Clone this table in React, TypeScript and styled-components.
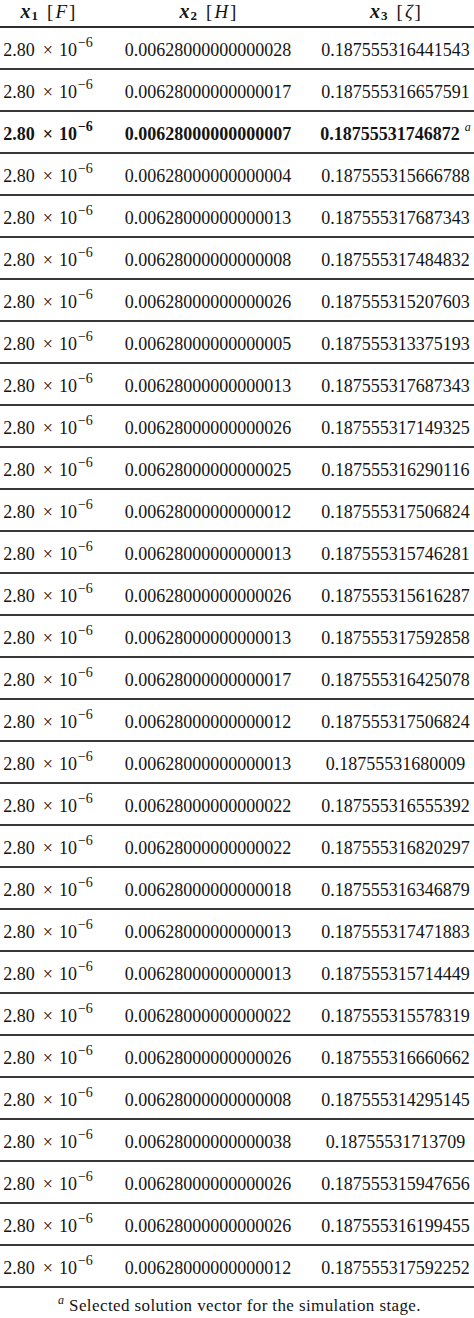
import { FC } from 'react';
import styled, { createGlobalStyle } from 'styled-components';

type Solution = {
  x2: string;
  x3: string;
  selected?: boolean;
};

const rows: Solution[] = [
  { x2: '0.00628000000000028', x3: '0.187555316441543' },
  { x2: '0.00628000000000017', x3: '0.187555316657591' },
  { x2: '0.00628000000000007', x3: '0.18755531746872', selected: true },
  { x2: '0.00628000000000004', x3: '0.187555315666788' },
  { x2: '0.00628000000000013', x3: '0.187555317687343' },
  { x2: '0.00628000000000008', x3: '0.187555317484832' },
  { x2: '0.00628000000000026', x3: '0.187555315207603' },
  { x2: '0.00628000000000005', x3: '0.187555313375193' },
  { x2: '0.00628000000000013', x3: '0.187555317687343' },
  { x2: '0.00628000000000026', x3: '0.187555317149325' },
  { x2: '0.00628000000000025', x3: '0.187555316290116' },
  { x2: '0.00628000000000012', x3: '0.187555317506824' },
  { x2: '0.00628000000000013', x3: '0.187555315746281' },
  { x2: '0.00628000000000026', x3: '0.187555315616287' },
  { x2: '0.00628000000000013', x3: '0.187555317592858' },
  { x2: '0.00628000000000017', x3: '0.187555316425078' },
  { x2: '0.00628000000000012', x3: '0.187555317506824' },
  { x2: '0.00628000000000013', x3: '0.18755531680009' },
  { x2: '0.00628000000000022', x3: '0.187555316555392' },
  { x2: '0.00628000000000022', x3: '0.187555316820297' },
  { x2: '0.00628000000000018', x3: '0.187555316346879' },
  { x2: '0.00628000000000013', x3: '0.187555317471883' },
  { x2: '0.00628000000000013', x3: '0.187555315714449' },
  { x2: '0.00628000000000022', x3: '0.187555315578319' },
  { x2: '0.00628000000000026', x3: '0.187555316660662' },
  { x2: '0.00628000000000008', x3: '0.187555314295145' },
  { x2: '0.00628000000000038', x3: '0.18755531713709' },
  { x2: '0.00628000000000026', x3: '0.187555315947656' },
  { x2: '0.00628000000000026', x3: '0.187555316199455' },
  { x2: '0.00628000000000012', x3: '0.187555317592252' },
];

const GlobalStyle = createGlobalStyle`
  html, body {
    margin: 0;
    padding: 0;
    background: #ffffff;
    overflow: hidden;
  }
  body {
    font-family: "Liberation Serif", "Times New Roman", serif;
    color: #141414;
  }
`;

const Page = styled.div`
  width: 474px;
  display: flex;
  flex-direction: column;
`;

const HeaderRow = styled.div`
  display: grid;
  grid-template-columns: 96px 224px 151px;
  height: 26px;
  border-bottom: 2px solid #2e2e2e;
  font-size: 19px;
`;

const Row = styled.div<{ $bold?: boolean }>`
  display: grid;
  grid-template-columns: 96px 224px 151px;
  height: 40px;
  border-bottom: 2px solid #383838;
  font-size: 18px;
  font-weight: ${({ $bold }) => ($bold ? 700 : 400)};
`;

const Cell = styled.div`
  min-width: 0;
  display: flex;
  justify-content: center;
  align-items: center;
  padding-top: 5px;
  white-space: nowrap;
`;

const HeadCell = styled(Cell)`
  padding-top: 0;
  padding-bottom: 3px;
`;

const Var = styled.span`
  font-style: italic;
  font-weight: 700;
  font-size: 20px;
`;

const Sub = styled.span`
  font-size: 13px;
  font-weight: 700;
  position: relative;
  top: 4px;
  margin-left: 1px;
`;

const Unit = styled.span`
  margin-left: 9px;
  font-weight: 400;
  em {
    font-style: italic;
    margin: 0 2px;
  }
`;

const Times = styled.span`
  margin: 0 6px 0 8px;
`;

const Exp = styled.span`
  font-size: 14px;
  position: relative;
  top: -8px;
  margin-left: 1px;
`;

const Mark = styled.span`
  font-size: 12px;
  font-style: italic;
  font-weight: 400;
  position: relative;
  top: -7px;
  margin-left: 5px;
`;

const Footnote = styled.div`
  padding-top: 8px;
  text-align: center;
  font-size: 17px;
  letter-spacing: 0.4px;
`;

const Header: FC<{ index: number; unit: string }> = ({ index, unit }) => (
  <HeadCell>
    <Var>x</Var>
    <Sub>{index}</Sub>
    <Unit>
      [<em>{unit}</em>]
    </Unit>
  </HeadCell>
);

const Capacitance: FC = () => (
  <Cell>
    2.80<Times>×</Times>10<Exp>−6</Exp>
  </Cell>
);

export default function App() {
  return (
    <Page>
      <GlobalStyle />
      <HeaderRow>
        <Header index={1} unit="F" />
        <Header index={2} unit="H" />
        <Header index={3} unit="ζ" />
      </HeaderRow>

      {rows.map((row, i) => (
        <Row key={i} $bold={row.selected}>
          <Capacitance />
          <Cell>{row.x2}</Cell>
          <Cell>
            {row.x3}
            {row.selected && <Mark>a</Mark>}
          </Cell>
        </Row>
      ))}

      <Footnote>
        <Mark>a</Mark> Selected solution vector for the simulation stage.
      </Footnote>
    </Page>
  );
}
